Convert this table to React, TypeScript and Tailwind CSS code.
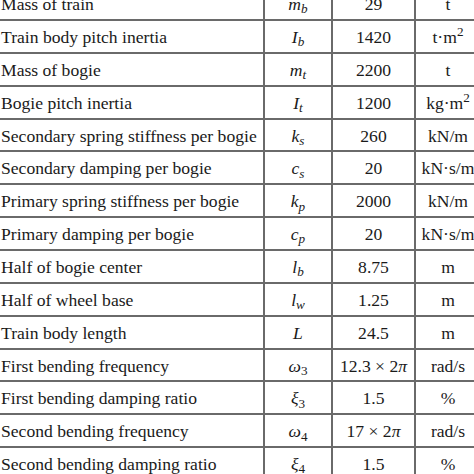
import React from 'react';

type Row = {
  name: string;
  sym: React.ReactNode;
  val: React.ReactNode;
  unit: React.ReactNode;
};

const Sym = ({ base, sub, subItalic = true }: { base: string; sub?: string; subItalic?: boolean }) => (
  <span>
    <i>{base}</i>
    {sub && <sub className={subItalic ? 'italic' : ''}>{sub}</sub>}
  </span>
);

const rows: Row[] = [
  { name: 'Mass of train', sym: <Sym base="m" sub="b" />, val: '29', unit: 't' },
  { name: 'Train body pitch inertia', sym: <Sym base="I" sub="b" />, val: '1420', unit: <>t·m<sup>2</sup></> },
  { name: 'Mass of bogie', sym: <Sym base="m" sub="t" />, val: '2200', unit: 't' },
  { name: 'Bogie pitch inertia', sym: <Sym base="I" sub="t" />, val: '1200', unit: <>kg·m<sup>2</sup></> },
  { name: 'Secondary spring stiffness per bogie', sym: <Sym base="k" sub="s" />, val: '260', unit: 'kN/m' },
  { name: 'Secondary damping per bogie', sym: <Sym base="c" sub="s" />, val: '20', unit: 'kN·s/m' },
  { name: 'Primary spring stiffness per bogie', sym: <Sym base="k" sub="p" />, val: '2000', unit: 'kN/m' },
  { name: 'Primary damping per bogie', sym: <Sym base="c" sub="p" />, val: '20', unit: 'kN·s/m' },
  { name: 'Half of bogie center', sym: <Sym base="l" sub="b" />, val: '8.75', unit: 'm' },
  { name: 'Half of wheel base', sym: <Sym base="l" sub="w" />, val: '1.25', unit: 'm' },
  { name: 'Train body length', sym: <Sym base="L" />, val: '24.5', unit: 'm' },
  { name: 'First bending frequency', sym: <Sym base="ω" sub="3" subItalic={false} />, val: <>12.3 × 2<i>π</i></>, unit: 'rad/s' },
  { name: 'First bending damping ratio', sym: <Sym base="ξ" sub="3" subItalic={false} />, val: '1.5', unit: '%' },
  { name: 'Second bending frequency', sym: <Sym base="ω" sub="4" subItalic={false} />, val: <>17 × 2<i>π</i></>, unit: 'rad/s' },
  { name: 'Second bending damping ratio', sym: <Sym base="ξ" sub="4" subItalic={false} />, val: '1.5', unit: '%' },
];

const App = () => {
  return (
    <div className="w-[474px] h-[474px] overflow-hidden bg-white">
      <div
        className="mt-[-13.85px] w-[480px] text-[17.6px] text-[#1a1a1a]"
        style={{ fontFamily: '"Liberation Serif", "Times New Roman", serif' }}
      >
        {rows.map((r, i) => (
          <div
            key={i}
            className="grid grid-cols-[263px_68px_83px_66px] h-[32.86px] border-t-2 border-[#6a6a6a] leading-[30.86px]"
          >
            <div className="pl-[1px] pt-[1px] whitespace-nowrap overflow-visible">{r.name}</div>
            <div className="border-l-2 border-[#6a6a6a] text-center pt-[1px] whitespace-nowrap">{r.sym}</div>
            <div className="border-l-2 border-[#6a6a6a] text-center pt-[1px] whitespace-nowrap">{r.val}</div>
            <div className="border-l-2 border-[#6a6a6a] text-center pt-[1px] whitespace-nowrap">{r.unit}</div>
          </div>
        ))}
      </div>
    </div>
  );
};

export default App;
